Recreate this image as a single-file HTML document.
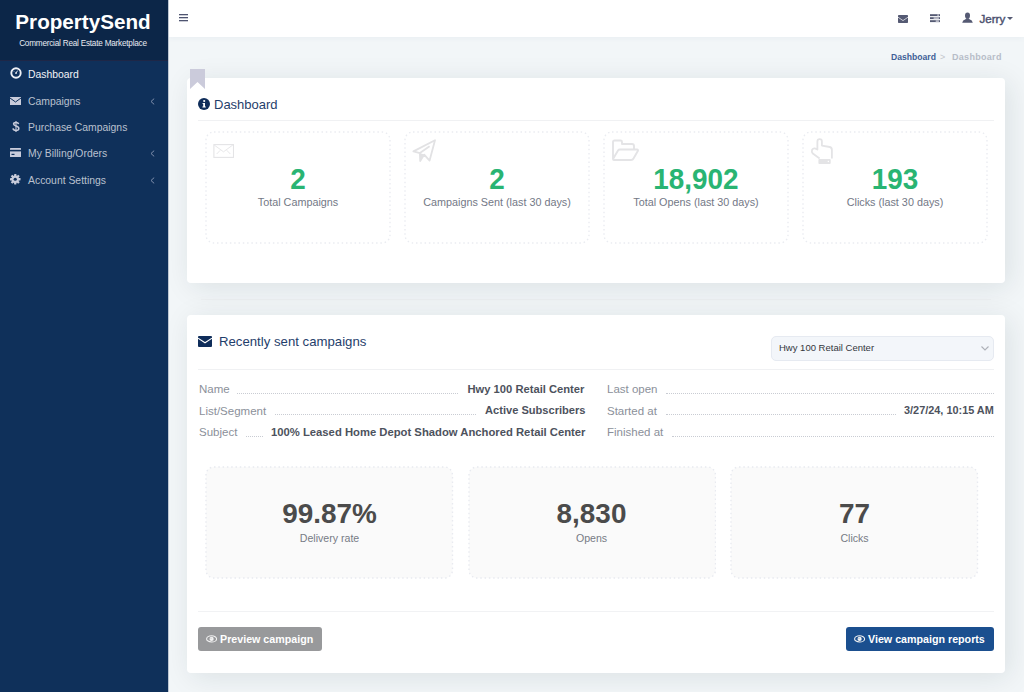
<!DOCTYPE html>
<html><head><meta charset="utf-8">
<style>
*{box-sizing:border-box;margin:0;padding:0}
html,body{width:1024px;height:692px;overflow:hidden}
body{font-family:"Liberation Sans",sans-serif;background:#f2f6f8;position:relative}
.abs{position:absolute}
#side{left:0;top:0;width:168px;height:692px;background:#0f305a}
#logo{left:0;top:0;width:168px;height:61px;background:#0c2648;border-bottom:1px solid #1e2747}
#logo .t{left:0;width:166px;top:10.3px;text-align:center;color:#fff;font-weight:bold;font-size:20.65px;line-height:24px;white-space:nowrap}
#logo .s{left:0;width:166px;top:38.5px;text-align:center;color:#e8ebf2;font-size:8.2px;line-height:10px;letter-spacing:-0.22px;white-space:nowrap}
.mi{left:0;width:168px;height:26px;color:#bac1cf;font-size:10.4px;line-height:26px;white-space:nowrap}
.mi .tx{position:absolute;left:28px;top:0}
.mi .ic{position:absolute;left:10px}
.mi .chev{position:absolute;left:150px}
#hdr{left:168px;top:0;width:856px;height:37px;background:#fff;box-shadow:0 1px 6px rgba(60,70,110,0.05)}
.panel{background:#fff;border-radius:4px;box-shadow:4px 4px 28px rgba(15,35,45,0.10)}
.stat{border:1px dashed #dfe3ea;border-radius:8px}
.g{color:#29b473;font-weight:bold;font-size:28.6px;line-height:30px;transform:scaleX(0.975);text-align:center;white-space:nowrap}
.lbl{color:#737886;font-size:10.8px;line-height:13px;text-align:center;white-space:nowrap}
.dl{color:#8b909a;font-size:11.5px;line-height:14px;white-space:nowrap}
.dv{color:#4d525d;font-size:11.1px;font-weight:bold;line-height:14px;white-space:nowrap}
.lead{border-bottom:1px dotted #c9ccd3;height:1px}
.bstat{background:#f9f9f9;border:1px dashed #e3e3e3;border-radius:8px}
.big{color:#4b4b4b;font-weight:bold;font-size:27.9px;line-height:30px;text-align:center;white-space:nowrap}
.sl{color:#777b85;font-size:10.6px;line-height:13px;text-align:center;white-space:nowrap}
.btn{border-radius:3px;color:#fff;font-weight:bold;font-size:10.7px;line-height:24px;height:24px;white-space:nowrap}
</style></head>
<body>
<!-- sidebar -->
<div id="side" class="abs"></div>
<div id="logo" class="abs">
  <div class="t abs">PropertySend</div>
  <div class="s abs">Commercial Real Estate Marketplace</div>
</div>

<div class="mi abs" style="top:61.5px;color:#f2f4f8">
  <svg class="ic" style="top:5.8px;left:9.5px" width="12" height="12" viewBox="0 0 12 12"><circle cx="6" cy="6" r="4.7" fill="none" stroke="#eef0f6" stroke-width="1.9"/><path d="M6 6 L7.6 3.6" stroke="#dfe3ee" stroke-width="1"/><circle cx="6" cy="6.1" r="0.9" fill="#f4f5f9"/><circle cx="4" cy="4.4" r="0.5" fill="#8a9ab8"/></svg>
  <span class="tx">Dashboard</span>
</div>
<div class="mi abs" style="top:88.6px">
  <svg class="ic" style="top:8.6px" width="11" height="8" viewBox="0 0 11 8"><rect x="0" y="0" width="11" height="8" fill="#c9ccdb"/><path d="M0 1 L5.5 5 L11 1" fill="none" stroke="#0f305a" stroke-width="1"/></svg>
  <span class="tx">Campaigns</span><svg class="chev" style="top:9px" width="5" height="7" viewBox="0 0 5 7"><path d="M4.2 0.6 L1 3.5 L4.2 6.4" fill="none" stroke="#7f8fac" stroke-width="1"/></svg>
</div>
<div class="mi abs" style="top:114.5px">
  <svg class="ic" style="left:12px;top:6.5px" width="8" height="11" viewBox="0 0 8 11"><path d="M6.6 3.2 Q6.3 1.6 4 1.6 Q1.6 1.6 1.6 3.1 Q1.6 4.4 4 4.9 Q6.8 5.5 6.8 7.4 Q6.8 9.4 4 9.4 Q1.3 9.4 1 7.3" fill="none" stroke="#c9ccdb" stroke-width="1.5"/><path d="M4 0 V11" stroke="#c9ccdb" stroke-width="1.1"/></svg>
  <span class="tx">Purchase Campaigns</span>
</div>
<div class="mi abs" style="top:141px">
  <svg class="ic" style="top:7px" width="11" height="9" viewBox="0 0 11 9"><rect x="0" y="0" width="11" height="9" rx="0.5" fill="#c9ccdb"/><rect x="0" y="1.8" width="11" height="1.6" fill="#0f305a"/><rect x="1.5" y="5.8" width="3" height="1.2" fill="#0f305a"/></svg>
  <span class="tx">My Billing/Orders</span><svg class="chev" style="top:9px" width="5" height="7" viewBox="0 0 5 7"><path d="M4.2 0.6 L1 3.5 L4.2 6.4" fill="none" stroke="#7f8fac" stroke-width="1"/></svg>
</div>
<div class="mi abs" style="top:167.5px">
  <svg class="ic" style="top:6.6px;left:10.3px" width="10.5" height="10.5" viewBox="0 0 22 22"><g fill="#c9ccdb" transform="translate(11 11)"><rect x="-2.4" y="-11" width="4.8" height="22" rx="0.8"/><rect x="-2.4" y="-11" width="4.8" height="22" rx="0.8" transform="rotate(45)"/><rect x="-2.4" y="-11" width="4.8" height="22" rx="0.8" transform="rotate(90)"/><rect x="-2.4" y="-11" width="4.8" height="22" rx="0.8" transform="rotate(135)"/><circle r="7.6"/></g><circle cx="11" cy="11" r="3.4" fill="#0f305a"/></svg>
  <span class="tx">Account Settings</span><svg class="chev" style="top:9px" width="5" height="7" viewBox="0 0 5 7"><path d="M4.2 0.6 L1 3.5 L4.2 6.4" fill="none" stroke="#7f8fac" stroke-width="1"/></svg>
</div>

<!-- header -->
<div id="hdr" class="abs">
  <svg class="abs" style="left:11px;top:14px" width="9" height="8" viewBox="0 0 9 8"><rect y="0" width="9" height="1.3" fill="#4e5470"/><rect y="3" width="9" height="1.3" fill="#4e5470"/><rect y="6" width="9" height="1.3" fill="#4e5470"/></svg>
  <svg class="abs" style="left:730px;top:14.5px" width="10" height="8" viewBox="0 0 10 8"><rect width="10" height="8" rx="0.7" fill="#555a73"/><path d="M0 2.2 L5 5.6 L10 2.2" fill="none" stroke="#d8d9e0" stroke-width="0.9"/></svg>
  <svg class="abs" style="left:762px;top:14px" width="10" height="8.5" viewBox="0 0 10 8.5"><rect y="0.2" width="10" height="1.9" fill="#555a73"/><rect x="7.3" y="0.2" width="1.6" height="1.9" fill="#b8bac6"/><rect y="3.2" width="10" height="1.9" fill="#555a73"/><rect x="3.6" y="3.2" width="5.3" height="1.9" fill="#b8bac6"/><rect y="6.2" width="10" height="1.9" fill="#555a73"/><rect x="5.7" y="6.2" width="3.2" height="1.9" fill="#b8bac6"/></svg>
  <svg class="abs" style="left:794px;top:12px" width="11" height="11" viewBox="0 0 11 11"><ellipse cx="5.5" cy="3.6" rx="2.5" ry="3.2" fill="#555a73"/><path d="M0.2 10.8 Q0.6 8 3.5 7.2 L4.2 6.2 H6.8 L7.5 7.2 Q10.4 8 10.8 10.8Z" fill="#555a73"/></svg>
  <span class="abs" style="left:811.5px;top:11.5px;font-size:11.6px;line-height:13px;color:#4d5270;-webkit-text-stroke:0.45px #4d5270">Jerry</span>
  <svg class="abs" style="left:839px;top:17px" width="6" height="3" viewBox="0 0 6 3"><path d="M0 0 L6 0 L3 3Z" fill="#555a73"/></svg>
</div>

<!-- breadcrumb -->
<span class="abs" style="left:891px;top:52px;font-size:8.6px;line-height:11px;font-weight:bold;color:#3f5f97">Dashboard</span>
<span class="abs" style="left:940px;top:52px;font-size:9px;line-height:11px;color:#c3c6cc">&gt;</span>
<span class="abs" style="left:952px;top:52px;font-size:9px;line-height:11px;font-weight:bold;letter-spacing:0.3px;color:#b7bdc8">Dashboard</span>

<!-- panel 1 -->
<div class="panel abs" style="left:187px;top:78px;width:818px;height:205px"></div>
<svg class="abs" style="left:190px;top:69px" width="15" height="20" viewBox="0 0 15 20"><path d="M0 0 H15 V20 L7.5 13 L0 20Z" fill="#cbcbdb"/></svg>
<svg class="abs" style="left:198px;top:98px" width="12" height="12" viewBox="0 0 12 12"><circle cx="6" cy="6" r="6" fill="#0f2d5a"/><circle cx="6.2" cy="3" r="1.1" fill="#fff"/><path d="M4.6 5 H7 V8.6 H7.8 V9.6 H4.4 V8.6 H5.2 V6 H4.6Z" fill="#fff"/></svg>
<span class="abs" style="left:214px;top:96.5px;font-size:13px;line-height:16px;color:#1f3e6b">Dashboard</span>
<div class="abs" style="left:198px;top:120px;width:796px;height:1px;background:#f0f1f3"></div>

<svg class="abs" style="left:205px;top:131px" width="186" height="113" viewBox="0 0 186 113"><rect x="1" y="1" width="184" height="111" rx="8" fill="none" stroke="#eaecf1" stroke-width="1.4" stroke-dasharray="1.5 2.8"/></svg>
<svg class="abs" style="left:404px;top:131px" width="186" height="113" viewBox="0 0 186 113"><rect x="1" y="1" width="184" height="111" rx="8" fill="none" stroke="#eaecf1" stroke-width="1.4" stroke-dasharray="1.5 2.8"/></svg>
<svg class="abs" style="left:603px;top:131px" width="186" height="113" viewBox="0 0 186 113"><rect x="1" y="1" width="184" height="111" rx="8" fill="none" stroke="#eaecf1" stroke-width="1.4" stroke-dasharray="1.5 2.8"/></svg>
<svg class="abs" style="left:802px;top:131px" width="186" height="113" viewBox="0 0 186 113"><rect x="1" y="1" width="184" height="111" rx="8" fill="none" stroke="#eaecf1" stroke-width="1.4" stroke-dasharray="1.5 2.8"/></svg>

<svg class="abs" style="left:213px;top:144px" width="21" height="14" viewBox="0 0 21 14"><rect x="0.9" y="0.6" width="19.6" height="12.8" fill="none" stroke="#e4e4e6" stroke-width="1.1"/><path d="M1.2 1 L10.5 7.8 L19.8 1 M3.7 10 L7.2 6.3 M17.3 10 L13.8 6.3" fill="none" stroke="#e4e4e6" stroke-width="0.9"/></svg>
<svg class="abs" style="left:405px;top:132px" width="40" height="34" viewBox="0 0 40 34"><path d="M8.4 19.4 L30 8.2 L24.6 28.6 L19.2 22.6 L15.2 29 L14.9 21.1 Z M14.9 21.1 L24.6 14.3" fill="none" stroke="#e2e2e4" stroke-width="1.8" stroke-linejoin="round"/><path d="M14.9 21.1 L19.2 22.6 L15.2 29Z" fill="#e2e2e4"/></svg>
<svg class="abs" style="left:611px;top:139px" width="29" height="23" viewBox="0 0 29 23"><path d="M2 20 V3 Q2 1.5 3.5 1.5 H9.5 Q11 1.5 11 3 V5 H21 Q23 5 23 7 V10.5 M2 20 L7 11.5 Q7.6 10.5 9 10.5 H26 Q27.5 10.5 26.8 12 L22.5 19.5 Q21.8 21 20 21 H3 Q2 21 2 20Z" fill="none" stroke="#e4e4e6" stroke-width="1.9" stroke-linejoin="round"/></svg>
<svg class="abs" style="left:803px;top:132px" width="40" height="38" viewBox="0 0 40 38"><path d="M16.6 26.6 L9.8 21.6 Q8.2 19.8 9.1 17.8 Q10.4 15.7 12.6 16.6 L14.4 17.5 V9.45 A2.25 2.25 0 0 1 18.9 9.45 V13.6 L26.8 15 Q28.9 15.5 28.9 17.9 V26.6" fill="none" stroke="#e4e4e6" stroke-width="1.8" stroke-linejoin="round"/><rect x="15.4" y="26.9" width="12.3" height="5.2" rx="1" fill="#e4e4e6"/><rect x="24.7" y="28.8" width="1.3" height="1.3" fill="#fff"/></svg>

<div class="g abs" style="left:206px;top:164px;width:184px">2</div>
<div class="lbl abs" style="left:206px;top:196.4px;width:184px">Total Campaigns</div>
<div class="g abs" style="left:405px;top:164px;width:184px">2</div>
<div class="lbl abs" style="left:405px;top:196.4px;width:184px">Campaigns Sent (last 30 days)</div>
<div class="g abs" style="left:604px;top:164px;width:184px">18,902</div>
<div class="lbl abs" style="left:604px;top:196.4px;width:184px">Total Opens (last 30 days)</div>
<div class="g abs" style="left:803px;top:164px;width:184px">193</div>
<div class="lbl abs" style="left:803px;top:196.4px;width:184px">Clicks (last 30 days)</div>

<div class="abs" style="left:201px;top:299px;width:790px;height:1px;background:rgba(90,40,40,0.022)"></div>
<!-- panel 2 -->
<div class="panel abs" style="left:187px;top:315px;width:818px;height:358px"></div>
<svg class="abs" style="left:198px;top:336px" width="14" height="11" viewBox="0 0 14 11"><rect width="14" height="11" rx="1" fill="#0f2d5a"/><path d="M0 2.2 L7 6.8 L14 2.2" fill="none" stroke="#fff" stroke-width="1.1"/></svg>
<span class="abs" style="left:219px;top:333.5px;font-size:13.2px;line-height:16px;color:#1f3e6b">Recently sent campaigns</span>

<div class="abs" style="left:771px;top:336px;width:223px;height:25px;background:#f3f6fa;border:1px solid #e6eaf1;border-radius:5px"></div>
<span class="abs" style="left:779px;top:342px;font-size:9.5px;line-height:12px;color:#33363d">Hwy 100 Retail Center</span>
<svg class="abs" style="left:981px;top:346px" width="8" height="5" viewBox="0 0 8 5"><path d="M0.5 0.5 L4 4 L7.5 0.5" fill="none" stroke="#aeb1b8" stroke-width="1.1"/></svg>
<div class="abs" style="left:198px;top:369px;width:796px;height:1px;background:#f0f1f3"></div>

<!-- details left -->
<span class="dl abs" style="left:199px;top:382.2px">Name</span>
<div class="lead abs" style="left:237px;top:393px;width:221px"></div>
<span class="dv abs" style="left:467.5px;top:381.9px;font-size:11.2px">Hwy 100 Retail Center</span>

<span class="dl abs" style="left:199px;top:403.6px">List/Segment</span>
<div class="lead abs" style="left:275px;top:414px;width:201px"></div>
<span class="dv abs" style="left:485px;top:403.3px">Active Subscribers</span>

<span class="dl abs" style="left:199px;top:424.8px">Subject</span>
<div class="lead abs" style="left:246px;top:436px;width:17px"></div>
<span class="dv abs" style="left:271px;top:425.4px;font-size:11.27px">100% Leased Home Depot Shadow Anchored Retail Center</span>

<!-- details right -->
<span class="dl abs" style="left:607px;top:382.2px">Last open</span>
<div class="lead abs" style="left:666px;top:393px;width:328px"></div>
<span class="dl abs" style="left:607px;top:403.6px">Started at</span>
<div class="lead abs" style="left:666px;top:414px;width:230px"></div>
<span class="dv abs" style="left:904px;top:403.3px;font-size:10.9px">3/27/24, 10:15 AM</span>
<span class="dl abs" style="left:607px;top:424.8px">Finished at</span>
<div class="lead abs" style="left:672px;top:436px;width:322px"></div>

<!-- big stats -->
<svg class="abs" style="left:205px;top:465.5px" width="248.5" height="113" viewBox="0 0 248.5 113"><rect x="1" y="1" width="246.5" height="111" rx="8" fill="#fafafa" stroke="#e8eaf0" stroke-width="1.4" stroke-dasharray="1.5 2.8"/></svg>
<svg class="abs" style="left:467.5px;top:465.5px" width="248.5" height="113" viewBox="0 0 248.5 113"><rect x="1" y="1" width="246.5" height="111" rx="8" fill="#fafafa" stroke="#e8eaf0" stroke-width="1.4" stroke-dasharray="1.5 2.8"/></svg>
<svg class="abs" style="left:730px;top:465.5px" width="248.5" height="113" viewBox="0 0 248.5 113"><rect x="1" y="1" width="246.5" height="111" rx="8" fill="#fafafa" stroke="#e8eaf0" stroke-width="1.4" stroke-dasharray="1.5 2.8"/></svg>
<div class="big abs" style="left:206px;top:499px;width:247px">99.87%</div>
<div class="sl abs" style="left:206px;top:531.5px;width:247px">Delivery rate</div>
<div class="big abs" style="left:468px;top:499px;width:247px">8,830</div>
<div class="sl abs" style="left:468px;top:531.5px;width:247px">Opens</div>
<div class="big abs" style="left:731px;top:499px;width:247px">77</div>
<div class="sl abs" style="left:731px;top:531.5px;width:247px">Clicks</div>

<div class="abs" style="left:198px;top:611px;width:796px;height:1px;background:#f1f2f4"></div>

<div class="btn abs" style="left:198px;top:627px;width:124px;background:#98999b">
  <svg class="abs" style="left:8.3px;top:8.2px" width="12" height="8" viewBox="0 0 12 8"><ellipse cx="5.6" cy="3.9" rx="5" ry="3.1" fill="none" stroke="#f2f2f2" stroke-width="1.1"/><circle cx="5.6" cy="3.9" r="2.1" fill="#f2f2f2"/><circle cx="5" cy="3.2" r="0.55" fill="#98999b" opacity="0.5"/></svg>
  <span class="abs" style="left:22px;top:0">Preview campaign</span>
</div>
<div class="btn abs" style="left:846px;top:627px;width:148px;background:#1b4f8f">
  <svg class="abs" style="left:8.3px;top:8.2px" width="12" height="8" viewBox="0 0 12 8"><ellipse cx="5.6" cy="3.9" rx="5" ry="3.1" fill="none" stroke="#f2f2f2" stroke-width="1.1"/><circle cx="5.6" cy="3.9" r="2.1" fill="#f2f2f2"/><circle cx="5" cy="3.2" r="0.55" fill="#1b4f8f" opacity="0.5"/></svg>
  <span class="abs" style="left:22px;top:0">View campaign reports</span>
</div>
<div class="abs" style="left:168px;top:0;width:1px;height:692px;background:#bdc6d2"></div>
</body></html>
